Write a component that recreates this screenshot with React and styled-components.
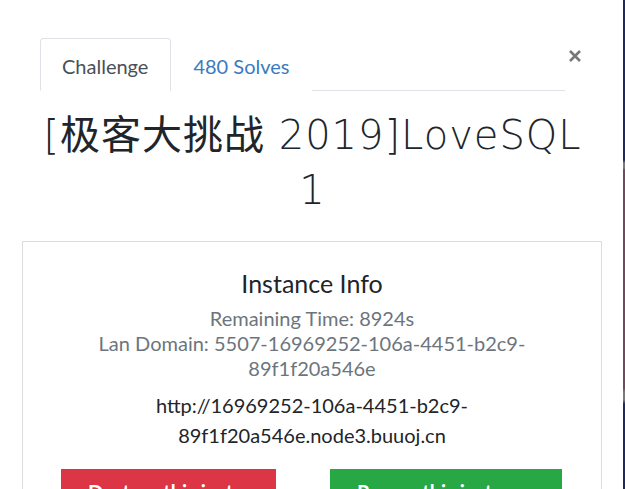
import React from "react";
import styled, { createGlobalStyle } from "styled-components";

const GlobalStyle = createGlobalStyle`
  html, body {
    margin: 0;
    padding: 0;
    background: #ffffff;
    overflow: hidden;
  }
  body {
    font-family: Lato, "Noto Sans CJK SC", sans-serif;
    color: #212529;
  }
`;

const Page = styled.div`
  display: flex;
  width: 625px;
  height: 489px;
  overflow: hidden;
`;

const Dialog = styled.div`
  flex: 1;
  background: #fff;
  padding-top: 38px;
  display: flex;
  flex-direction: column;
`;

// the dimmed page behind the modal peeks out at the right edge
const Backdrop = styled.div`
  width: 2px;
  background: linear-gradient(
    to bottom,
    #1e2a5a 0 160px,
    #7a7a7a 163px 168px,
    #6e4a5e 170px 388px,
    #7a7a7a 392px 400px,
    #1e2a5a 404px
  );
`;

const Header = styled.div`
  display: flex;
  align-items: flex-start;
  padding-left: 40px;
`;

const Tabs = styled.ul`
  flex: 0 0 525px;
  display: flex;
  list-style: none;
  margin: 0;
  padding: 0;
  border-bottom: 1px solid #dee2e6;
  height: 52px;
`;

const Tab = styled.li`
  box-sizing: border-box;
  height: 53px;
  padding: 2px 22px 0 21px;
  display: flex;
  align-items: center;
  font-size: 20px;
  color: ${(p) => (p.$active ? "#495057" : "#3a7bbf")};
  background: #fff;
  border: 1px solid ${(p) => (p.$active ? "#dee2e6" : "transparent")};
  border-bottom-color: ${(p) => (p.$active ? "#fff" : "transparent")};
  border-radius: 4px 4px 0 0;
`;

const Close = styled.button`
  margin: 10px 0 0 2px;
  border: none;
  background: none;
  padding: 0;
  width: 16px;
  height: 16px;
  display: flex;
  align-items: center;
  justify-content: center;
`;

const Title = styled.h1`
  margin: 17px 38px 0 40px;
  font-family: "DejaVu Sans", "Noto Sans CJK SC", sans-serif;
  font-weight: 300;
  font-size: 40px;
  letter-spacing: 1px;
  line-height: 55px;
  text-align: center;
  color: #212529;
`;

const Cjk = styled.span`
  font-family: "Noto Sans CJK SC", sans-serif;
  font-weight: 400;
  line-height: 1;
`;

const Card = styled.div`
  margin: 23px 21px 0 22px;
  border: 1px solid #dddddd;
  padding: 26px 20px 40px;
  display: flex;
  flex-direction: column;
  align-items: center;
  text-align: center;
`;

const CardTitle = styled.h5`
  margin: 0 0 8px;
  font-size: 25px;
  font-weight: 400;
  line-height: 30px;
  color: #212529;
`;

const Muted = styled.div`
  font-size: 20px;
  line-height: 25px;
  color: #6c757d;
  max-width: 480px;
`;

const Link = styled.div`
  margin-top: 9px;
  font-size: 20px;
  line-height: 30px;
  color: #212529;
  max-width: 400px;
`;

const Actions = styled.div`
  display: flex;
  gap: 54px;
  margin-top: 19px;
  width: 100%;
  padding: 0 18px;
  box-sizing: border-box;
`;

const Button = styled.button`
  border: none;
  border-radius: 0;
  width: ${(p) => p.$w}px;
  background: ${(p) => p.$bg};
  color: #fff;
  font-family: Lato, sans-serif;
  font-size: 20px;
  font-weight: 700;
  line-height: 24px;
  padding: 11px 0 13px 27px;
  text-align: left;
  white-space: nowrap;
  overflow: hidden;
`;

export default function App() {
  return (
    <>
      <GlobalStyle />
      <Page>
        <Dialog>
          <Header>
            <Tabs>
              <Tab $active>Challenge</Tab>
              <Tab>480 Solves</Tab>
            </Tabs>
            <Close aria-label="Close">
              <svg width="14" height="14" viewBox="0 0 14 14">
                <path
                  d="M2 2 L12 12 M12 2 L2 12"
                  stroke="#777"
                  strokeWidth="2.6"
                />
              </svg>
            </Close>
          </Header>
          <Title>
            [<Cjk>极客大挑战</Cjk> 2019]LoveSQL 1
          </Title>
          <Card>
            <CardTitle>Instance Info</CardTitle>
            <Muted>Remaining Time: 8924s</Muted>
            <Muted>
              Lan Domain: 5507-16969252-106a-4451-b2c9-89f1f20a546e
            </Muted>
            <Link>http://16969252-106a-4451-b2c9-89f1f20a546e.node3.buuoj.cn</Link>
            <Actions>
              <Button $bg="#dc3545" $w={215}>Destroy this instance</Button>
              <Button $bg="#28a745" $w={232}>Renew this instance</Button>
            </Actions>
          </Card>
        </Dialog>
        <Backdrop />
      </Page>
    </>
  );
}
